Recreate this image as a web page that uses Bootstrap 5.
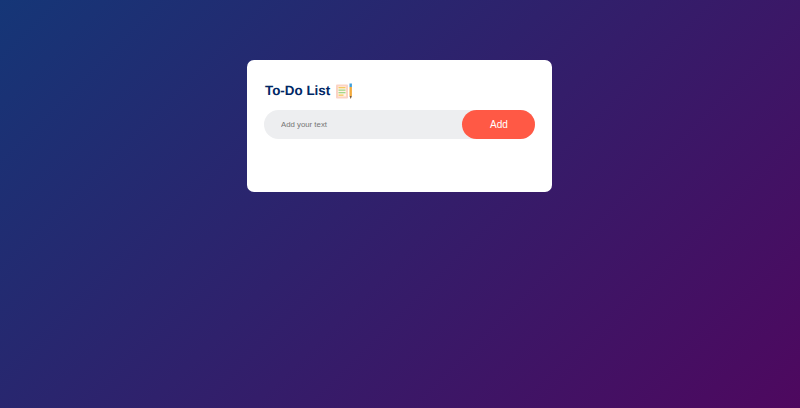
<!DOCTYPE html>
<html lang="en">
<head>
<meta charset="utf-8">
<title>To-Do List</title>
<link href="https://cdn.jsdelivr.net/npm/bootstrap@5.3.0/dist/css/bootstrap.min.css" rel="stylesheet">
<style>
html,body{height:100%}
body{font-family:"Liberation Sans",Arial,sans-serif;background:linear-gradient(135deg,#153677,#4e085f);min-height:408px;overflow:hidden;text-rendering:geometricPrecision}
.todo-page{padding:60px 1px 0 0}
.todo-box{width:305px;height:132px;border-radius:7px;padding:20px 17px 0;background:#fff}
.todo-title{font-size:13.4px;font-weight:700;color:#002765;line-height:20px;padding:1px 0 0 1px;margin-bottom:9px;gap:5px}
.todo-title svg{display:block}
.todo-row{background:#edeef0;border-radius:15px;height:28.5px;padding-left:17px}
.todo-input{flex:1;min-width:0;border:0;outline:0;background:transparent;font-size:7.8px;padding:1px 0 0;color:#333}
.todo-input::placeholder{color:#757575;opacity:1}
.todo-add{width:73px;height:100%;border:0;border-radius:15px;background:#ff5945;color:#fff;font-size:10px;padding:1px 0 0 1px}
</style>
</head>
<body>
<main class="todo-page d-flex justify-content-center">
  <section class="todo-box">
    <h2 class="todo-title d-flex align-items-center">To-Do List
      <svg width="18" height="17" viewBox="0 0 18 17" aria-hidden="true">
        <rect x="1" y="1.5" width="12" height="14" rx="1" fill="#fbd3c4"/>
        <rect x="3" y="3.5" width="8" height="10" fill="#fff4e6"/>
        <rect x="3.5" y="4" width="7" height="1.3" fill="#f4c95d"/>
        <rect x="3.5" y="6.5" width="7" height="1.3" fill="#a5d68a"/>
        <rect x="3.5" y="9" width="7" height="1.3" fill="#a5d68a"/>
        <rect x="3.5" y="11.5" width="5" height="1.3" fill="#f4c95d"/>
        <rect x="14.5" y="0.5" width="2.4" height="3.5" fill="#3f9fdc"/>
        <rect x="14.5" y="4" width="2.4" height="9" fill="#f2a93b"/>
        <path d="M14.5 13h2.4l-1.2 3z" fill="#7a5a3a"/>
      </svg>
    </h2>
    <form class="todo-row d-flex align-items-center" onsubmit="return false">
      <input class="todo-input" type="text" placeholder="Add your text">
      <button class="todo-add" type="button">Add</button>
    </form>
  </section>
</main>
<script src="https://cdn.jsdelivr.net/npm/bootstrap@5.3.0/dist/js/bootstrap.bundle.min.js"></script>
</body>
</html>
